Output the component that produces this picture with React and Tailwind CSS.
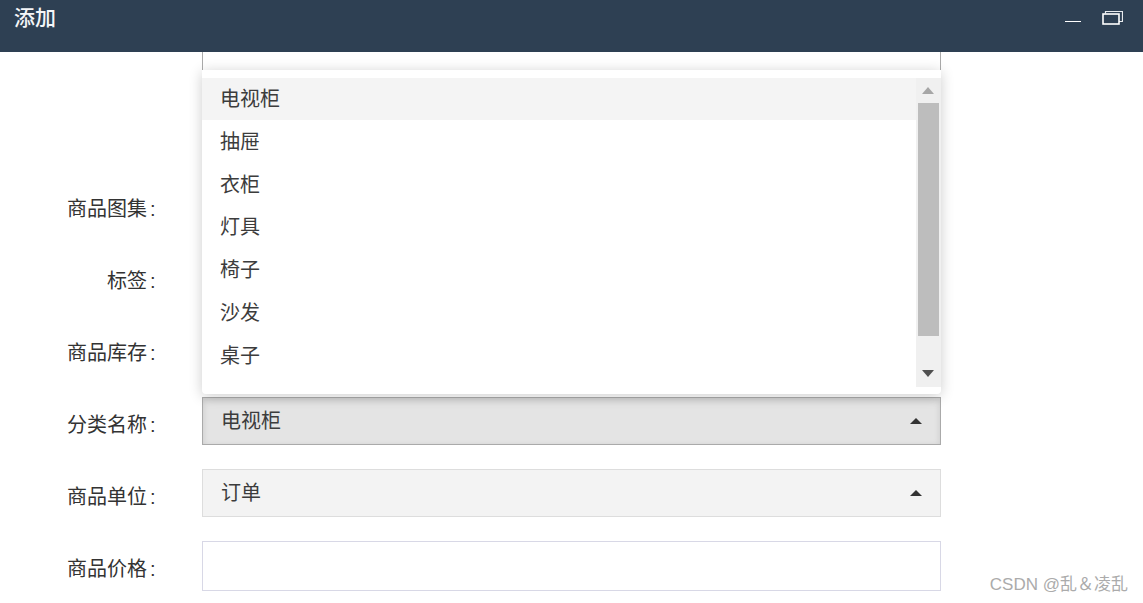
function Label({ children, className = "" }) {
  return (
    <div className={"w-[157px] text-right text-[20px] leading-none text-[#333] shrink-0 " + className}>
      {children}
      <span className="inline-block w-[10px] text-left pl-[3px]">:</span>
    </div>
  );
}

function Row({ label, children }) {
  return (
    <div className="flex items-center h-12 mb-6">
      <Label className="pt-2">{label}</Label>
      <div className="ml-[45px] w-[739px] h-full">{children}</div>
    </div>
  );
}

function Caret() {
  return (
    <svg width="12" height="6" viewBox="0 0 12 6" className="shrink-0">
      <path d="M6 0 L12 6 L0 6 Z" fill="#333" />
    </svg>
  );
}

function SelectBox({ value, className }) {
  return (
    <div className={"h-full flex items-center justify-between pl-[18px] pr-[18px] border text-[20px] text-[#3c3c3c] " + className}>
      <span className="-mt-[1px]">{value}</span>
      <Caret />
    </div>
  );
}

const items = ["电视柜", "抽屉", "衣柜", "灯具", "椅子", "沙发", "桌子"];

export default function App() {
  return (
    <div className="relative w-[1143px] h-[603px] overflow-hidden bg-white font-['Liberation_Sans','Noto_Sans_CJK_SC',sans-serif]">
      <header className="h-[52px] bg-[#2e4053] flex items-start justify-between">
        <h1 className="ml-[14px] mt-[4px] text-[21px] leading-7 font-medium text-[#f4f6f8]">添加</h1>
        <div className="flex items-start mr-[20px] mt-[11px] gap-[21px]">
          <svg width="16" height="13" viewBox="0 0 16 13">
            <path d="M0 10.5 H16" stroke="#fff" strokeWidth="1" />
          </svg>
          <svg width="21" height="14" viewBox="0 0 21 14">
            <path d="M3.5 2.5 V0.5 H20.5 V10.5 H17" fill="none" stroke="#e8ebee" strokeWidth="1.2" />
            <rect x="1" y="3" width="16" height="10" fill="#2e4053" stroke="#fff" strokeWidth="1.6" />
          </svg>
        </div>
      </header>

      <main>
        <div className="ml-[202px] w-[739px] h-[105px] mb-6 border-x border-b border-[#aaa]" />
        <Row label="商品图集"><div className="h-full border border-[#ddd]" /></Row>
        <Row label="标签"><div className="h-full border border-[#ddd]" /></Row>
        <Row label="商品库存"><div className="h-full border border-[#ddd]" /></Row>
        <Row label="分类名称">
          <SelectBox value="电视柜" className="bg-[#e4e4e4] border-[#aaaaaa] shadow-[inset_0_2px_6px_rgba(0,0,0,0.12)]" />
        </Row>
        <Row label="商品单位">
          <SelectBox value="订单" className="bg-[#f3f3f3] border-[#dddddd]" />
        </Row>
        <div className="flex items-center h-[50px]">
          <Label className="pt-[6px]">商品价格</Label>
          <div className="ml-[45px] w-[739px] h-full border border-[#d8d8e6] bg-white" />
        </div>
      </main>

      <div className="absolute left-[202px] top-[70px] w-[739px] h-[324px] bg-white rounded-b-[4px] shadow-[0_2px_14px_rgba(0,0,0,0.2)] pt-2 flex items-start">
        <ul className="flex-1 text-[20px] text-[#3c3c3c]">
          {items.map((t, i) => (
            <li key={t} className={"pl-[18px] flex items-center " + (i === 0 ? "h-[42px] bg-[#f4f4f4]" : "h-[42.8px] pt-[1px]")}>
              <span className={i === 0 ? "-mt-[1px]" : ""}>{t}</span>
            </li>
          ))}
        </ul>
        <div className="w-[25px] h-[309px] bg-[#f0f0f0] pl-[2px] pr-[2px] flex flex-col items-center">
          <div className="h-[25px] w-full flex items-center justify-center pr-[2px]">
            <svg width="12" height="7" viewBox="0 0 12 7"><path d="M6 0 L12 7 L0 7 Z" fill="#a6a6a6" /></svg>
          </div>
          <div className="h-[233px] w-[21px] bg-[#bdbdbd] self-start" />
          <div className="h-[51px] w-full flex items-center justify-center pt-[24px] pr-[2px]">
            <svg width="12" height="7" viewBox="0 0 12 7"><path d="M0 0 L12 0 L6 7 Z" fill="#505050" /></svg>
          </div>
        </div>
      </div>

      <div className="absolute right-[15px] top-[575px] text-[17px] leading-5 text-[#ababab] whitespace-nowrap">CSDN @乱＆凌乱</div>
    </div>
  );
}
